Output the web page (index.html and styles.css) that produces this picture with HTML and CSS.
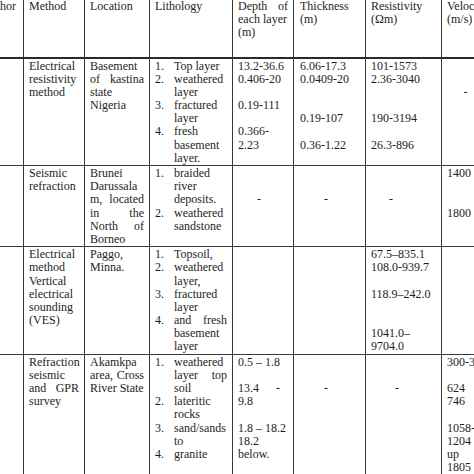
FILE: index.html
```html
<!DOCTYPE html>
<html>
<head>
<meta charset="utf-8">
<link rel="stylesheet" href="styles.css">
</head>
<body>
<div class="viewport">
<table class="tbl">
<colgroup>
<col class="c-author"><col class="c-method"><col class="c-loc"><col class="c-lith"><col class="c-depth"><col class="c-thick"><col class="c-res"><col class="c-vel">
</colgroup>
<thead>
<tr>
<th><div class="ln">Author</div></th>
<th><div class="ln">Method</div></th>
<th><div class="ln">Location</div></th>
<th><div class="ln">Lithology</div></th>
<th><div class="ln j">Depth of</div><div class="ln">each layer</div><div class="ln">(m)</div></th>
<th class="thick"><div class="ln">Thickness</div><div class="ln">(m)</div></th>
<th><div class="ln">Resistivity</div><div class="ln">(Ωm)</div></th>
<th><div class="ln">Velocity</div><div class="ln">(m/s)</div></th>
</tr>
</thead>
<tbody>
<tr>
<td></td>
<td><div class="ln">Electrical</div><div class="ln">resistivity</div><div class="ln">method</div></td>
<td><div class="ln">Basement</div><div class="ln j">of kastina</div><div class="ln">state</div><div class="ln">Nigeria</div></td>
<td>
<div class="li"><span class="no">1.</span><div class="lt"><div class="ln">Top layer</div></div></div>
<div class="li"><span class="no">2.</span><div class="lt"><div class="ln">weathered</div><div class="ln">layer</div></div></div>
<div class="li"><span class="no">3.</span><div class="lt"><div class="ln">fractured</div><div class="ln">layer</div></div></div>
<div class="li"><span class="no">4.</span><div class="lt"><div class="ln">fresh</div><div class="ln">basement</div><div class="ln">layer.</div></div></div>
</td>
<td><div class="ln">13.2-36.6</div><div class="ln">0.406-20</div><div class="ln"></div><div class="ln">0.19-111</div><div class="ln"></div><div class="ln">0.366-</div><div class="ln">2.23</div></td>
<td class="thick"><div class="ln">6.06-17.3</div><div class="ln">0.0409-20</div><div class="ln"></div><div class="ln"></div><div class="ln">0.19-107</div><div class="ln"></div><div class="ln">0.36-1.22</div></td>
<td><div class="ln">101-1573</div><div class="ln">2.36-3040</div><div class="ln"></div><div class="ln"></div><div class="ln">190-3194</div><div class="ln"></div><div class="ln">26.3-896</div></td>
<td><div class="ln"></div><div class="ln"></div><div class="ln ctr">-</div></td>
</tr>
<tr>
<td></td>
<td><div class="ln">Seismic</div><div class="ln">refraction</div></td>
<td><div class="ln">Brunei</div><div class="ln">Darussala</div><div class="ln j">m, located</div><div class="ln j">in the</div><div class="ln j">North of</div><div class="ln">Borneo</div></td>
<td>
<div class="li"><span class="no">1.</span><div class="lt"><div class="ln">braided</div><div class="ln">river</div><div class="ln">deposits.</div></div></div>
<div class="li"><span class="no">2.</span><div class="lt"><div class="ln">weathered</div><div class="ln">sandstone</div></div></div>
</td>
<td><div class="ln"></div><div class="ln"></div><div class="ln"><span class="dash d19">-</span></div></td>
<td class="thick"><div class="ln"></div><div class="ln"></div><div class="ln"><span class="dash d24">-</span></div></td>
<td><div class="ln"></div><div class="ln"></div><div class="ln"><span class="dash d18">-</span></div></td>
<td><div class="ln">1400</div><div class="ln"></div><div class="ln"></div><div class="ln">1800</div></td>
</tr>
<tr>
<td></td>
<td><div class="ln">Electrical</div><div class="ln">method</div><div class="ln">Vertical</div><div class="ln">electrical</div><div class="ln">sounding</div><div class="ln">(VES)</div></td>
<td><div class="ln">Paggo,</div><div class="ln">Minna.</div></td>
<td>
<div class="li"><span class="no">1.</span><div class="lt"><div class="ln">Topsoil,</div></div></div>
<div class="li"><span class="no">2.</span><div class="lt"><div class="ln">weathered</div><div class="ln">layer,</div></div></div>
<div class="li"><span class="no">3.</span><div class="lt"><div class="ln">fractured</div><div class="ln">layer</div></div></div>
<div class="li"><span class="no">4.</span><div class="lt"><div class="ln j">and fresh</div><div class="ln">basement</div><div class="ln">layer</div></div></div>
</td>
<td></td>
<td class="thick"></td>
<td><div class="ln">67.5–835.1</div><div class="ln">108.0-939.7</div><div class="ln"></div><div class="ln">118.9–242.0</div><div class="ln"></div><div class="ln"></div><div class="ln">1041.0–</div><div class="ln">9704.0</div></td>
<td></td>
</tr>
<tr>
<td></td>
<td><div class="ln">Refraction</div><div class="ln">seismic</div><div class="ln j">and GPR</div><div class="ln">survey</div></td>
<td><div class="ln">Akamkpa</div><div class="ln j">area, Cross</div><div class="ln">River State</div></td>
<td>
<div class="li"><span class="no">1.</span><div class="lt"><div class="ln">weathered</div><div class="ln j">layer top</div><div class="ln">soil</div></div></div>
<div class="li"><span class="no">2.</span><div class="lt"><div class="ln">lateritic</div><div class="ln">rocks</div></div></div>
<div class="li"><span class="no">3.</span><div class="lt"><div class="ln">sand/sands</div><div class="ln">to</div></div></div>
<div class="li"><span class="no">4.</span><div class="lt"><div class="ln">granite</div></div></div>
</td>
<td><div class="ln">0.5 – 1.8</div><div class="ln"></div><div class="ln">13.4<span class="dash d17">-</span></div><div class="ln">9.8</div><div class="ln"></div><div class="ln">1.8 – 18.2</div><div class="ln">18.2</div><div class="ln">below.</div></td>
<td class="thick"><div class="ln"></div><div class="ln"></div><div class="ln"><span class="dash d24">-</span></div></td>
<td><div class="ln"></div><div class="ln"></div><div class="ln"><span class="dash d24">-</span></div></td>
<td><div class="ln">300-3500</div><div class="ln"></div><div class="ln j">624 -</div><div class="ln">746</div><div class="ln"></div><div class="ln">1058-</div><div class="ln">1204</div><div class="ln j">up to</div><div class="ln">1805</div></td>
</tr>
</tbody>
</table>
</div>
</body>
</html>
```

FILE: styles.css
```css
html, body {
  margin: 0;
  padding: 0;
  background: #ffffff;
}

.viewport {
  width: 474px;
  height: 474px;
  overflow: hidden;
}

.tbl {
  border-collapse: collapse;
  table-layout: fixed;
  width: 513px;
  margin: -2px 0 0 -24px;
  font-family: "Liberation Serif", "Times New Roman", serif;
  font-size: 12px;
  line-height: 13.2px;
  color: #1e1e1e;
}

.c-author { width: 47px; }
.c-method { width: 61px; }
.c-loc { width: 65px; }
.c-lith { width: 83px; }
.c-depth { width: 61px; }
.c-thick { width: 72px; }
.c-res { width: 76px; }
.c-vel { width: 48px; }

.tbl th,
.tbl td {
  border: 1px solid #3a3a3a;
  vertical-align: top;
  text-align: left;
  font-weight: normal;
  padding: 1px 5px 0 5px;
}

.tbl th {
  border-bottom: 2px solid #2a2a2a;
}

.tbl thead tr {
  height: 59px;
}

.tbl .thick {
  padding-left: 6px;
}

.ln {
  height: 13.2px;
  white-space: nowrap;
}

.ln.j {
  text-align: justify;
  text-align-last: justify;
  white-space: normal;
}

.ln.ctr {
  text-align: center;
}

.li {
  display: flex;
}

.no {
  flex: none;
  width: 19px;
}

.lt {
  flex: 1;
  min-width: 0;
}

.dash {
  display: inline-block;
}

.d17 { margin-left: 17px; }
.d18 { margin-left: 18px; }
.d19 { margin-left: 19px; }
.d24 { margin-left: 24px; }
```
